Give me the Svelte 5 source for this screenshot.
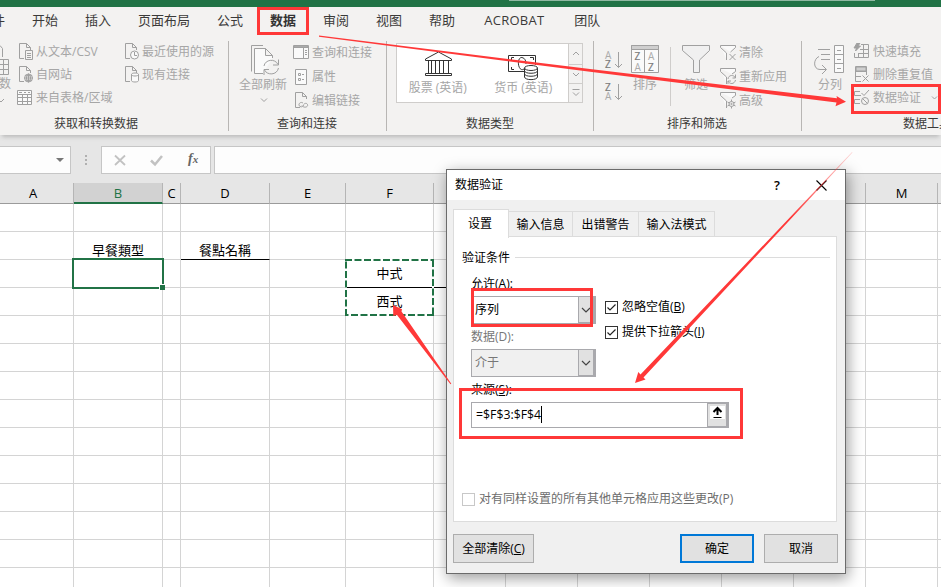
<script>
  const tabs = ['文件', '开始', '插入', '页面布局', '公式', '数据', '审阅', '视图', '帮助', 'ACROBAT', '团队'];
  const doc = 'M7 15.5H2.5V.5H9.5L13.5 4.5V7M9.5 .5V4.5H13.5';

  // small 18x18 ribbon icons: [path, fill]
  const icons = {
    text: [[doc], ['M8.5 7.5H15.5V16.5H8.5Z', '#f3f2f1'], ['M10 10.5H14M10 12.5H14M10 14.5H14']],
    web: [[doc], ['M15.5 12A4 4 0 1 1 7.5 12A4 4 0 1 1 15.5 12Z', '#f3f2f1'], ['M7.5 12H15.5M11.5 8V16M8.5 9.8H14.5M8.5 14.2H14.5M11.5 8C8.8 10 8.8 14 11.5 16C14.2 14 14.2 10 11.5 8']],
    table: [['M.5 1.5H14.5V15.5H.5Z', '#fafafa'], ['M.5 5.5H14.5M.5 8.5H14.5M.5 12.5H14.5M5.5 5.5V15.5M10.5 5.5V15.5M2 3.5H5M7 3.5H9M11 3.5H13']],
    recent: [[doc], ['M15.5 12A4 4 0 1 1 7.5 12A4 4 0 1 1 15.5 12Z', '#fafafa'], ['M11.5 9V12.5H14']],
    conn: [[doc], ['M8.5 8.5C8.5 6.5 15.5 6.5 15.5 8.5V14.5C15.5 16.5 8.5 16.5 8.5 14.5Z', '#fafafa'], ['M8.5 8.5C8.5 10.5 15.5 10.5 15.5 8.5']],
    query: [['M.5 1.5H15.5V14.5H.5Z', '#fafafa'], ['M.5 3.5H15.5M10.5 3.5V14.5M12 6.5H14M12 8.5H14M12 10.5H14'], ['M1 2H15V3H1Z', '#c8c8c8']],
    props: [['M2.5 1.5H13.5V16.5H2.5Z', '#fafafa'], ['M5.5 5.5H7.5V7.5H5.5ZM5.5 10.5H7.5V12.5H5.5ZM9 6.5H11M9 11.5H11']],
    links: [[doc], ['M10 11C7 9 4.5 13 7 14.5C9 15.5 10 14 11 13M9 13.5C11 16.5 15.5 15 14.5 12.5C13.5 10.5 11.5 11.5 10.5 12.5']],
    clear: [['M.5 1.5H15.5V3.5L10.5 8M6.5 16V9L.5 3.5V1.5', '#fafafa'], ['M9.5 10L15.5 16M15.5 10L9.5 16']],
    reapply: [['M.5 .5H15.5V3.5L12 6M6.5 16V9L.5 3.5V.5', '#fafafa'], ['M8 11C8.5 6.5 14 6.5 15.5 10M15.5 6.5V10H12.5M15.5 12C14.5 16.5 9.5 16.5 8 13M8 16V13H11']],
    advanced: [['M.5 .5H15.5V3.5L12 6M6.5 16V9L.5 3.5V.5', '#fafafa'], ['M14 12A2.5 2.5 0 1 1 9 12A2.5 2.5 0 1 1 14 12ZM11.5 7.5V9.5M11.5 14.5V16.5M7.5 10L9.3 11M13.7 13L15.5 14M7.5 14L9.3 13M13.7 11L15.5 10'], ['M12.2 12A.7 .7 0 1 1 10.8 12A.7 .7 0 1 1 12.2 12Z']],
    fill: [['M8 1.5H15.5V14.5H1.5V10M5 10.5H15.5M7 6.5H15.5M10.5 1.5V14.5M5.5 10V14.5'], ['M4 0H7L5 3H7.5L2.5 8L3.5 5H1Z', '#a0a0a0']],
    dedupe: [['M2.5 .5H13.5V9M8 15.5H2.5V.5M2.5 5.5H13.5M2.5 10.5H8'], ['M3 1H13V5H3Z', '#cfcfcf'], ['M9.5 9.5L15.5 15.5M15.5 9.5L9.5 15.5']],
    valid: [['M7 2.5H1.5V6.5H8M7 10.5H1.5V14.5H7M8.5 4L11 6.5L16 1'], ['M15.5 12A3.5 3.5 0 1 1 8.5 12A3.5 3.5 0 1 1 15.5 12ZM9.5 9.5L14.5 14.5', '#f3f2f1']]
  };
  const source = [['text', '从文本/CSV'], ['web', '自网站'], ['table', '来自表格/区域']];
  const recent = [['recent', '最近使用的源'], ['conn', '现有连接']];
  const queries = [['query', '查询和连接'], ['props', '属性'], ['links', '编辑链接']];
  const filters = [['clear', '清除'], ['reapply', '重新应用'], ['advanced', '高级']];
  const tools = [['fill', '快速填充'], ['dedupe', '删除重复值'], ['valid', '数据验证']];

  const cols = [['A', 74], ['B', 89], ['C', 18], ['D', 89], ['E', 76], ['F', 88], ['G', 72], ['H', 72], ['I', 72], ['J', 72], ['K', 72], ['L', 72], ['M', 72], ['N', 72]];
  const rows = Array.from({ length: 14 }, (_, i) => i + 1);
  const values = { B2: '早餐類型', D2: '餐點名稱', F3: '中式', F4: '西式' };
  const ruled = ['D2', 'F3', 'G3'];
</script>

{#snippet small(list, tight)}
  <div class="list" class:tight>
    {#each list as [name, label]}
      <div class="item">
        <svg width="18" height="18" viewBox="0 0 18 18">
          {#each icons[name] as [d, fill]}
            <path {d} fill={fill ?? 'none'} />
          {/each}
        </svg>
        <span>{label}</span>
        {#if name === 'valid'}
          <svg class="more" width="8" height="6" viewBox="0 0 8 6"><path d="M1 1.5L3.5 4L6 1.5" fill="none" /></svg>
        {/if}
      </div>
    {/each}
  </div>
{/snippet}

<div class="app">
  <div class="titlebar"><i></i></div>
  <nav>
    {#each tabs as t}
      <span class:active={t === '数据'} class:latin={t === 'ACROBAT'}>{t}</span>
    {/each}
  </nav>

  <div class="ribbon">
    <section class="get">
      <div class="body">
        <div class="cut">
          <svg width="12" height="35" viewBox="0 0 12 35"><path d="M0 4.500L2.500 7.500V16M0 18.500H8.500V33.500H0M0 23.500H8.500M0 28.500H8.500M3.500 18.500V33.500" fill="none" /></svg>
          <b>数</b>
          <svg width="10" height="6" viewBox="0 0 10 6"><path d="M-2 1L1 4L4 1" fill="none" /></svg>
        </div>
        {@render small(source, true)}
        {@render small(recent, true)}
      </div>
      <h4>获取和转换数据</h4>
    </section>

    <section class="query">
      <div class="body">
        <div class="big">
          <svg width="32" height="34" viewBox="0 0 32 34">
            <path d="M3.500 29.500V3.500H15" fill="none" /><path d="M15 31.500H6.500V6.500H17.500L24.500 13.500V16M17.500 6.500V13.500H24.500" fill="#fafafa" />
            <path d="M16 24C17 17.500 27 16 30 22.500M30.500 17.500V23H25M30.500 26C29 33.500 19 33.500 16.500 28M16 33V27.500H21" fill="none" />
          </svg>
          <span>全部刷新</span>
          <svg width="8" height="6" viewBox="0 0 8 6"><path d="M1 1.500L4 4.500L7 1.500" fill="none" /></svg>
        </div>
        {@render small(queries, false)}
      </div>
      <h4>查询和连接</h4>
    </section>

    <section class="types">
      <div class="body">
        <div class="gallery">
          <div class="type">
            <svg class="dark" width="32" height="30" viewBox="0 0 32 30"><path d="M3.500 9.500V8L16.500 1L29.500 8V9.500ZM6.500 10V22M9.500 10V22M13.500 10V22M17.500 10V22M21.500 10V22M26.500 10V22M3.500 22.500H29.500V24.500H3.500Z" fill="none" /></svg>
            <span>股票 (英语)</span>
          </div>
          <div class="type">
            <svg class="dark" width="32" height="30" viewBox="0 0 32 30">
              <path d="M17 20.500H1.500V4.500H28.500V14M7 6.500H4.500V9M4.500 16V18.500H7M23 6.500H26.500V9M17 18C11 22 9 6 15 6.500C18 7 19 10 19 13" fill="none" />
              <path d="M17.500 17V26C18 29.500 30 29.500 30.500 26V17" fill="#fff" /><ellipse cx="24" cy="17" rx="6.500" ry="2.500" fill="#fff" />
              <path d="M17.500 20C18 23 30 23 30.500 20M17.500 23C18 26 30 26 30.500 23" fill="none" />
            </svg>
            <span>货币 (英语)</span>
          </div>
          <div class="scroll">
            <svg width="14" height="20" viewBox="0 0 14 20"><path d="M4 11L7 8L10 11" fill="none" /></svg>
            <svg width="14" height="18" viewBox="0 0 14 18"><path d="M4 8L7 11L10 8" fill="none" /></svg>
            <svg width="14" height="18" viewBox="0 0 14 18"><path d="M3.500 5.500H10.500M4 8.500L7 11.500L10 8.500" fill="none" /></svg>
          </div>
        </div>
      </div>
      <h4>数据类型</h4>
    </section>

    <section class="sort">
      <div class="body">
        <div class="az">
          {#each [['A', 'Z'], ['Z', 'A']] as [top, bottom]}
            <svg width="20" height="20" viewBox="0 0 20 20">
              <text x="0" y="8" class:strong={top === 'Z'}>{top}</text><text x="0" y="17" class:strong={bottom === 'Z'}>{bottom}</text>
              <path d="M13.500 1V16.500M10 13L13.500 16.500L17 13" fill="none" />
            </svg>
          {/each}
        </div>
        <div class="big sorter">
          <svg width="30" height="34" viewBox="0 0 30 34">
            <path d="M1.500 3.500H28.500V30.500H1.500Z" fill="#fafafa" /><path d="M1.500 3.500H28.500V7.500H1.500Z" fill="#cfcfcf" /><path d="M14.500 7.500V30.500" />
            <text x="4.500" y="18" class="strong">Z</text><text x="4.500" y="28.500">A</text><text x="18" y="18">A</text><text x="18" y="28.500" class="strong">Z</text>
          </svg>
          <span>排序</span>
        </div>
        <div class="rule"></div>
        <div class="big filter">
          <svg width="30" height="34" viewBox="0 0 30 34"><path d="M1.500 3.500H28.500V8.500L18.500 18V30.500H12.500V18L1.500 8.500Z" fill="#f0f0f0" /></svg>
          <span>筛选</span>
        </div>
        {@render small(filters, false)}
      </div>
      <h4>排序和筛选</h4>
    </section>

    <section class="tools">
      <div class="body">
        <div class="big">
          <svg width="32" height="34" viewBox="0 0 32 34">
            <path d="M20.500 3.500H29.500V30.500H20.500ZM20.500 12.500H29.500M20.500 21.500H29.500M23 8.500H27M23 17.500H27M23 26.500H27" fill="#fafafa" />
            <path d="M4 7.500H16M7 12.500H16M7 17.500H16M5 14.500C-1 17 -1 27.500 6 27.500H12M8 23L12.500 27.500L8 32" fill="none" />
          </svg>
          <span>分列</span>
        </div>
        {@render small(tools, true)}
      </div>
      <h4>数据工具</h4>
    </section>
  </div>

  <div class="formula">
    <div class="name"><i></i></div>
    <svg width="30" height="28" viewBox="0 0 30 28"><path d="M14 9h2v2h-2zM14 13h2v2h-2zM14 17h2v2h-2z" fill="#b0b0b0" stroke="none" /></svg>
    <div class="fx">
      <svg width="72" height="26" viewBox="0 0 72 26"><path d="M13 8.500L23 18M23 8.500L13 18" fill="none" stroke="#c2c2c2" stroke-width="1.800" /><path d="M49 13.500L53 17.500L60 9" fill="none" stroke="#c2c2c2" stroke-width="2.500" /></svg>
      <em>f<small>x</small></em>
    </div>
    <div class="input"></div>
  </div>

  <div class="sheet">
    <div class="row head">
      {#each cols as [c, w]}<div class="cell" class:first={c === 'A'} class:on={c === 'B'} style="width:{w}px">{c}</div>{/each}
    </div>
    {#each rows as r}
      <div class="row" class:middle={r > 2}>
        {#each cols as [c, w]}
          <div class="cell" class:ruled={ruled.includes(c + r)} style="width:{w}px">{values[c + r] ?? ''}</div>
        {/each}
      </div>
    {/each}
    <div class="selection"></div>
    <svg class="ants" width="90" height="58" viewBox="0 0 90 58"><rect x="1" y="1" width="87" height="55" fill="none" stroke="#fff" stroke-width="2" /><path d="M0 1H89M88 1V57M89 56H0M1 57V0" fill="none" stroke="#217346" stroke-width="2" stroke-dasharray="7 2.500" /></svg>
  </div>

  <div class="dialog">
    <header><span>数据验证</span><b>?</b>
      <svg width="11" height="11" viewBox="0 0 11 11"><path d="M.5 .5L10.500 10.500M10.500 .5L.5 10.500" stroke="#000" stroke-width="1.100" /></svg>
    </header>
    <div class="dtabs"><span class="cur">设置</span><span>输入信息</span><span>出错警告</span><span>输入法模式</span></div>
    <div class="panel">
      <div class="legend">验证条件<hr /></div>
      <div class="fields">
        <div class="left">
          <label>允许(<u>A</u>):</label>
          <div class="select"><span>序列</span><i><svg width="10" height="6" viewBox="0 0 10 6"><path d="M1 1L5 5L9 1" fill="none" stroke="#444" stroke-width="1.200" /></svg></i></div>
          <label class="off">数据(D):</label>
          <div class="select off"><span>介于</span><i><svg width="10" height="6" viewBox="0 0 10 6"><path d="M1 1L5 5L9 1" fill="none" stroke="#444" stroke-width="1.200" /></svg></i></div>
        </div>
        <div class="checks">
          {#each [['忽略空值', 'B'], ['提供下拉箭头', 'I']] as [t, k]}
            <div class="check"><i><svg width="11" height="11" viewBox="0 0 11 11"><path d="M1.500 5.500L4 8L9.500 2.500" fill="none" stroke="#222" stroke-width="1.200" /></svg></i>{t}(<u>{k}</u>)</div>
          {/each}
        </div>
      </div>
      <label class="src">来源(<u>S</u>):</label>
      <div class="range"><span>=$F$3:$F$4</span>
        <i><svg width="15" height="13" viewBox="0 0 15 13"><path d="M0 0H15V13H0Z" fill="#fff" stroke="none" /><path d="M7.500 9V2.500M3.500 6L7.500 2L11.500 6" fill="none" stroke="#000" stroke-width="2" /><path d="M3.500 11.500H11.500" stroke="#000" /></svg></i>
      </div>
      <div class="check apply"><i></i>对有同样设置的所有其他单元格应用这些更改(P)</div>
    </div>
    <footer><button class="wide">全部清除(<u>C</u>)</button><button class="ok">确定</button><button>取消</button></footer>
  </div>

  <svg class="marks" width="941" height="587" viewBox="0 0 941 587">
    <defs><linearGradient id="fade" gradientUnits="userSpaceOnUse" x1="852" y1="152" x2="790" y2="216"><stop offset="0" stop-color="#ff3838" stop-opacity="0.200" /><stop offset="1" stop-color="#ff3838" /></linearGradient></defs>
    <g fill="none" stroke="#ff3838" stroke-width="3">
      <rect x="258.500" y="8.500" width="49" height="25" /><rect x="852.500" y="85.500" width="87" height="27" />
      <rect x="472.500" y="289.500" width="119" height="36" /><rect x="460.500" y="389.500" width="281" height="48" />
    </g>
    <g fill="#ff3838">
      <path d="M319 35.600L590 69L837 98.300L836.500 96L846 101.700L835.500 106.300L836.500 102.500L590 71.800L319 36.800Z" />
      <path d="M451.300 383.700L401.500 311.500L402 309.300L393 305L393.300 316L397 315L450.500 384.300Z" />
      <path d="M852 152L640.500 374.500L638.300 372L635 383L645.500 379.500L643.500 377.500L852.500 152.500Z" fill="url(#fade)" />
    </g>
  </svg>
</div>

<style>
  :global(body) { margin: 0; overflow: hidden; }
  .app { position: relative; width: 941px; height: 587px; overflow: hidden; background: #e6e6e6; font: 12px/16px "Open Sans", "Noto Sans CJK SC", sans-serif; color: #000; }
  .app * { box-sizing: border-box; }
  svg { display: block; flex: none; }
  i, em { font-style: normal; }
  .titlebar { height: 7px; background: #217346; }
  .titlebar i { display: block; height: 1px; margin: 0 66px 0 509px; background: #90b9a3; }
  nav { display: flex; gap: 27px; width: 962px; height: 31px; padding-top: 3px; margin-left: -21px; background: #f3f2f1; font-size: 13px; line-height: 20px; color: #3b3a39; white-space: nowrap; }
  nav .active { font-weight: 700; color: #333; width: 26px; }
  nav .latin { margin: 0 2px 0 2px; width: 61px; letter-spacing: .3px; }

  .ribbon { display: flex; width: 941px; height: 97px; padding-top: 3px; background: #f3f2f1; box-shadow: 0 4px 4px -2px #bbb; position: relative; color: #a6a6a6; white-space: nowrap; }
  .ribbon svg { stroke: #a0a0a0; }
  .ribbon section { flex: none; height: 90px; border-right: 1px solid #b8b6b4; overflow: hidden; }
  .body { display: flex; height: 76px; }
  h4 { margin: 0; font-weight: 400; color: #3b3a39; line-height: 14px; }
  .get { width: 229px; }
  .query { width: 158px; }
  .types { width: 207px; }
  .sort { width: 208px; }
  .ribbon .tools { width: 139px; border: 0; }
  .get h4 { padding-left: 54px; }
  .query h4 { padding-left: 48px; }
  .types h4 { padding-left: 79px; }
  .sort h4 { padding-left: 73px; }
  .tools h4 { padding-left: 101px; }
  .cut { width: 17px; }
  .cut b { display: block; font-weight: 400; margin: 0 0 6px -1px; }
  .list { display: flex; flex-direction: column; gap: 6px; padding-top: 3px; }
  .list.tight { gap: 5px; padding-top: 2px; }
  .item { display: flex; align-items: center; gap: 1px; height: 18px; }
  .get .list:nth-child(2) { width: 106px; }
  .item .more { margin-left: 8px; }
  .big { display: flex; flex-direction: column; align-items: center; width: 64px; padding-top: 1px; }
  .big span { margin: 1px 0 4px; }
  .query .big { padding-left: 4px; }
  .query .big svg { margin-right: -2px; }
  .gallery { display: flex; width: 187px; height: 60px; margin: 2px 0 0 9px; border: 1px solid #cfcdcb; background: #fff; }
  .type { position: relative; left: -2px; width: 86px; padding-top: 7px; display: flex; flex-direction: column; align-items: center; }
  .type svg.dark { stroke: #333; }
  .type .dark { margin-bottom: -1px; }
  .scroll { width: 14px; background: #f3f2f1; border-left: 1px solid #cfcdcb; }
  .scroll svg + svg { border-top: 1px solid #cfcdcb; height: 19px; }
  .az svg, .sorter svg { overflow: visible; }
  text { font: 10px "Open Sans", sans-serif; fill: #aaa; stroke: none; }
  text.strong { fill: #777; stroke: #888; stroke-width: .2; }
  .az { display: flex; flex-direction: column; gap: 12px; padding: 10px 0 0 11px; width: 36px; }
  .sorter { width: 30px; }
  .rule { width: 1px; height: 59px; margin: 6px 10px 0; background: #cfcdcb; }
  .filter { width: 30px; margin-right: 9px; }
  .tools .big { width: 51px; padding-left: 5px; }
  .tools .item { gap: 2px; }

  .formula { display: flex; height: 28px; margin-top: 11px; }
  .formula .name { width: 71px; background: #fdfdfd; border: 1px solid #c6c6c6; border-left: 0; display: flex; justify-content: flex-end; align-items: center; padding-right: 6px; }
  .name i { border: 4px solid transparent; border-top-color: #777; border-bottom: 0; }
  .fx { display: flex; width: 110px; background: #fdfdfd; border: 1px solid #c6c6c6; }
  .fx em { font: italic bold 14px/24px "Liberation Serif", serif; color: #666; padding-left: 14px; }
  .fx small { font-size: 11px; }
  .input { flex: 1; margin-left: 3px; background: #fdfdfd; border: 1px solid #c6c6c6; border-right: 0; }

  .sheet { position: relative; margin-top: 9px; width: 941px; height: 404px; overflow: hidden; background: #fff; }
  .row { display: flex; width: 1030px; }
  .cell { flex: none; height: 28px; padding-top: 9px; border-right: 1px solid #d4d4d4; border-bottom: 1px solid #d4d4d4; text-align: center; font-size: 13px; line-height: 18px; white-space: nowrap; font-family: "Open Sans", "Noto Sans CJK TC", sans-serif; }
  .middle .cell { padding-top: 4px; }
  .cell.ruled { border-bottom-color: #000; }
  .head .cell { height: 21px; padding-top: 1px; background: #e6e6e6; border-right-color: #b5b5b5; border-bottom-color: #9b9b9b; }
  .head .first { padding-right: 7px; }
  .head .on { background: #d2d2d2; color: #217346; border-bottom: 2px solid #217346; }
  .selection { position: absolute; left: 72px; top: 75px; width: 92px; height: 31px; border: 2px solid #217346; }
  .selection::after { content: ""; position: absolute; right: -3px; bottom: -3px; width: 5px; height: 5px; background: #217346; border: solid #fff; border-width: 1px 0 0 1px; box-sizing: content-box; }
  .ants { position: absolute; left: 345px; top: 76px; }

  .dialog { position: absolute; left: 446px; top: 169px; width: 400px; height: 405px; border: 1px solid #6b6b6b; background: #f0f0f0; box-shadow: 2px 4px 14px rgba(0, 0, 0, .4); padding: 0 7px 0 6px; }
  header { display: flex; align-items: center; height: 30px; margin: 0 -7px 0 -6px; padding: 0 18px 0 8px; background: #fff; }
  header b { margin-left: auto; margin-right: 36px; font-weight: 600; font-size: 13px; }
  .dtabs { display: flex; align-items: flex-end; height: 37px; }
  .dtabs span { height: 26px; line-height: 26px; border: 1px solid #dcdcdc; border-left: 0; width: 66px; text-align: center; }
  .dtabs span:nth-child(2) { width: 64px; }
  .dtabs span:last-child { width: 76px; }
  .dtabs .cur { position: relative; height: 29px; line-height: 28px; width: 56px; margin-bottom: -1px; border: 1px solid #dcdcdc; border-bottom: 0; background: #fff; padding-right: 2px; }
  .panel { width: 384px; height: 286px; margin-top: -1px; border: 1px solid #dcdcdc; background: #fff; padding: 13px 6px 0 8px; }
  .legend { display: flex; align-items: center; gap: 5px; height: 16px; }
  hr { flex: 1; margin: 0 0 2px; border: 0; height: 1px; background: #dcdcdc; }
  .fields { display: flex; padding-left: 9px; }
  .left { width: 134px; padding-top: 10px; }
  label { display: block; height: 16px; }
  .select { display: flex; justify-content: space-between; width: 125px; height: 28px; margin: 4px 0 5px; border: 1px solid #a9a9ad; line-height: 26px; padding-left: 3px; }
  .select i { width: 17px; border: 1px solid #a9a9ad; border-width: 0 2px 1px 1px; background: #e1e1e1; display: flex; align-items: center; justify-content: center; }
  .off { color: #777; }
  .select.off { background: #f0f0f0; }
  .checks { padding-top: 33px; }
  .check { display: flex; align-items: center; height: 16px; margin-bottom: 9px; white-space: nowrap; }
  .check i { width: 13px; height: 13px; border: 1px solid #333; margin-right: 4px; }
  .apply { margin: 63px 0 0; color: #6d6d6d; }
  .apply i { border-color: #c8c8c8; }
  .src { margin-left: 9px; }
  .range { display: flex; justify-content: space-between; width: 258px; height: 26px; margin: 4px 0 0 9px; border: 1px solid #a9a9ad; }
  .range span { font-size: 12.3px; line-height: 17px; height: 17px; margin: 3px 0 0 4px; border-right: 1px solid #000; }
  .range i { width: 21px; background: #e1e1e1; border: solid #a9a9ad; border-width: 1px 2px 1px 1px; padding: 2px 0 0 2px; }
  footer { display: flex; padding-top: 12px; }
  button { width: 74px; height: 29px; margin-left: 10px; padding: 0; border: 1px solid #adadad; background: #e1e1e1; font: inherit; color: #000; }
  .wide { width: 81px; margin: 0 auto 0 0; }
  .ok { border: 2px solid #0078d7; }
  u { text-underline-offset: 1px; }
  .marks { position: absolute; left: 0; top: 0; }
</style>
